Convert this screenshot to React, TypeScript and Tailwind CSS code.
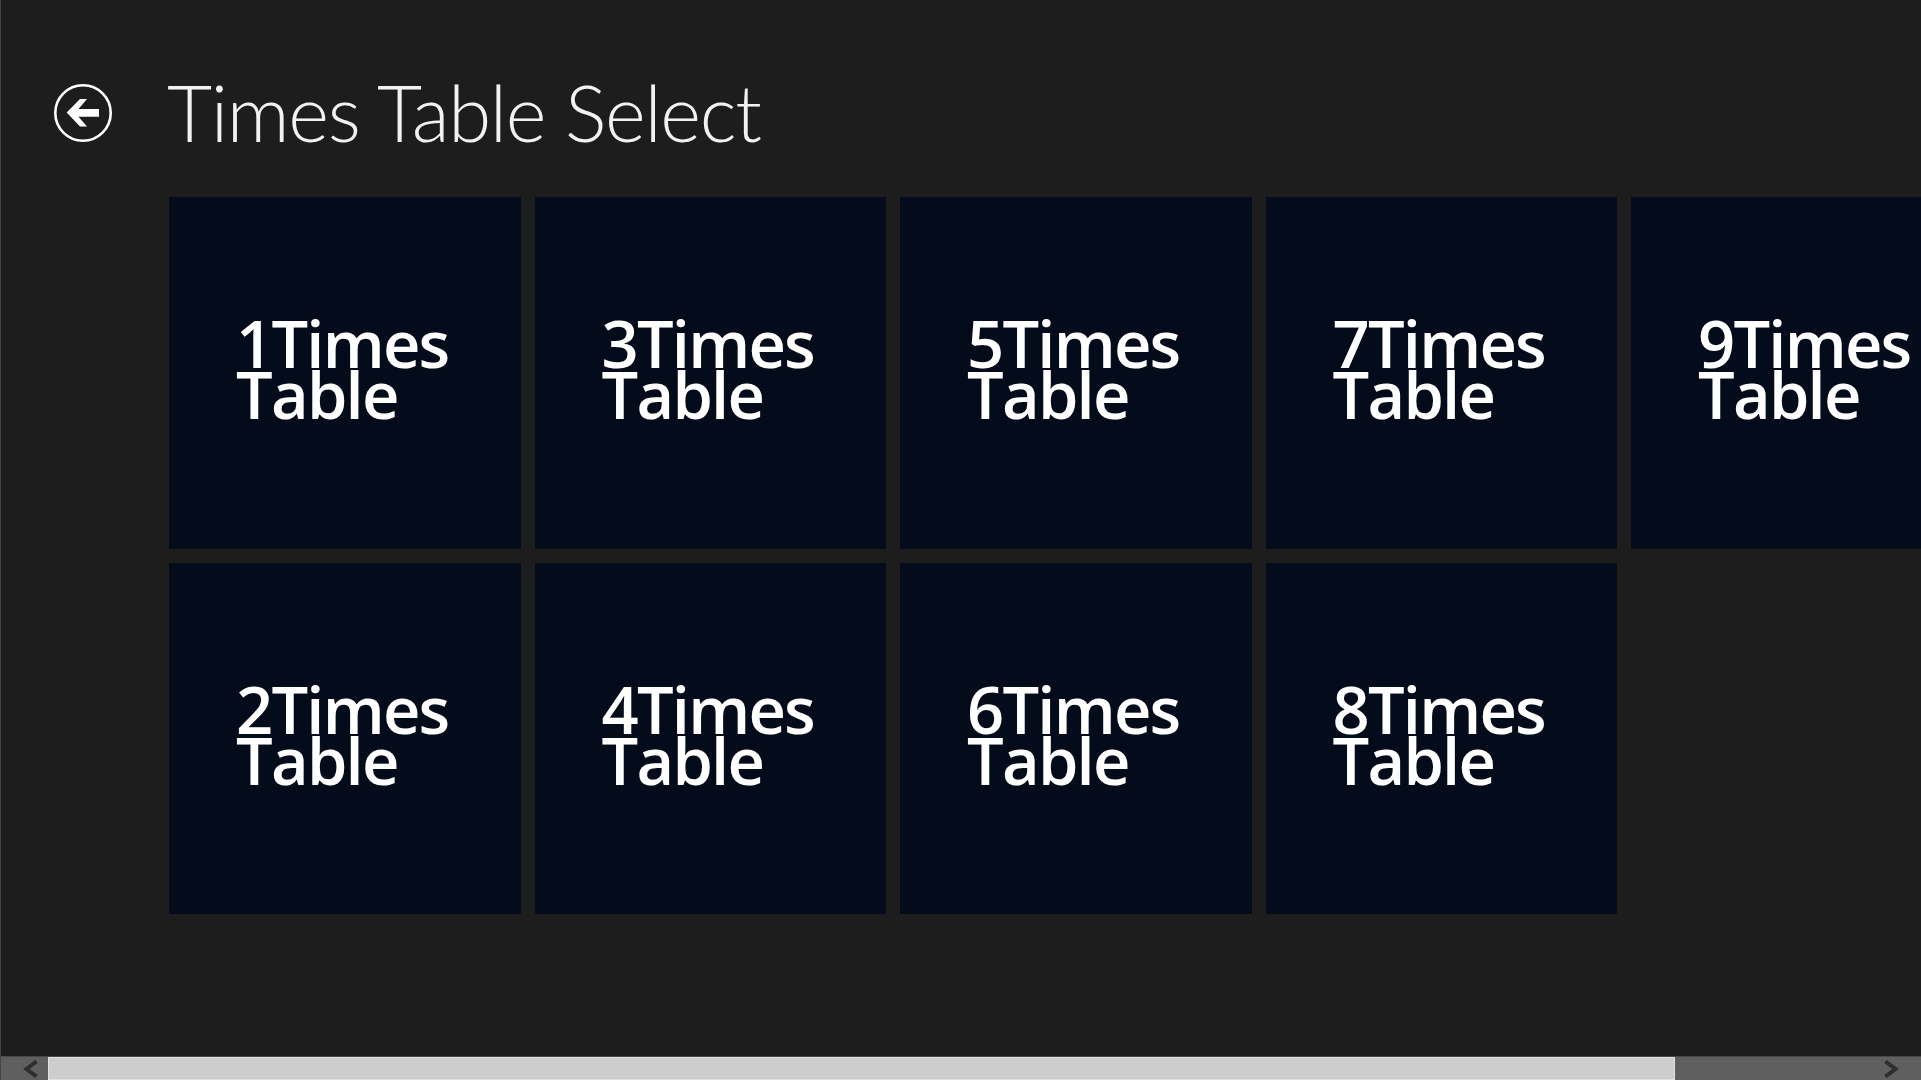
const tiles = [1, 2, 3, 4, 5, 6, 7, 8, 9];

function BackIcon() {
  return (
    <svg width="58" height="58" viewBox="0 0 58 58" fill="none" className="shrink-0">
      <circle cx="29" cy="29" r="27.7" stroke="#fff" strokeWidth="2.6" />
      <path d="M12.7 28.5 L26 15 H33 L24.5 25 H45 V32.7 H24.5 L33 42.5 H26 Z" fill="#fff" />
    </svg>
  );
}

export default function App() {
  return (
    <div className="flex h-screen w-full flex-col overflow-hidden border-l border-[#444444] bg-[#1d1d1d] font-['Open_Sans',sans-serif] text-white">
      <header className="flex h-[197px] shrink-0 items-start pl-[53px] pt-[84px]">
        <BackIcon />
        <h1 className="ml-[55px] mt-[-17px] font-['Lato',sans-serif] text-[78px] font-light leading-[90px] tracking-[-1.3px] text-[#f2f2f2]">Times Table Select</h1>
      </header>

      <div className="flex-1 overflow-hidden pl-[168px]">
        <div className="grid w-max grid-flow-col grid-rows-[351.5px_351.5px] auto-cols-[351.5px] gap-[14px]">
          {tiles.map((n) => (
            <button key={n} className="flex items-center justify-center bg-[#040b1a] pb-[7px] pr-[5px]">
              <span className="w-min text-left text-[65px] font-semibold leading-[51px] tracking-[-1.8px] text-white">{n}Times Table</span>
            </button>
          ))}
        </div>
      </div>

      <div className="flex h-[24px] shrink-0 items-stretch border-t border-[#484848] bg-[#5f5f5f]">
        <div className="flex w-[47px] items-center justify-center pl-[12px]">
          <svg width="16" height="18" viewBox="0 0 16 18" fill="none"><path d="M13.5 1.5 L3.5 9 L13.5 16.5" stroke="#2e2e2e" strokeWidth="4" /></svg>
        </div>
        <div className="w-[1627px] border border-[#e2e2e2] bg-[#cdcdcd]" />
        <div className="flex flex-1 items-center justify-end pr-[22px]">
          <svg width="16" height="18" viewBox="0 0 16 18" fill="none"><path d="M2.5 1.5 L12.5 9 L2.5 16.5" stroke="#2e2e2e" strokeWidth="4" /></svg>
        </div>
      </div>
    </div>
  );
}
